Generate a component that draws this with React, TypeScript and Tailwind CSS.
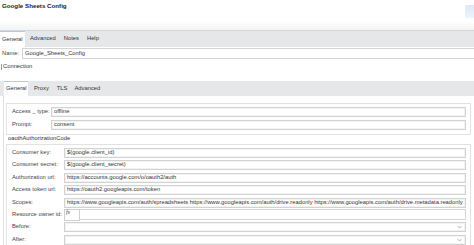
import React from "react";

const Input = ({ value, chevron }: { value?: string; chevron?: boolean }) => (
  <div className="flex-1 min-w-0 h-[10px] border border-[#d2d2d2] bg-white shadow-[inset_0_0_0_1px_#f3f3f3] flex items-center px-[2px] overflow-hidden whitespace-nowrap leading-none">
    <span className="flex-1 min-w-0 overflow-hidden">{value}</span>
    {chevron && (
      <svg width="5" height="4" viewBox="0 0 5 4" className="shrink-0 mr-[1px]">
        <path d="M0.5 1 L2.5 3 L4.5 1" fill="none" stroke="#9a9a9a" strokeWidth="0.7" />
      </svg>
    )}
  </div>
);

const Row = ({ label, children, lw }: { label: string; children: React.ReactNode; lw: string }) => (
  <div className="flex items-center h-[12.4px] pr-[4px]">
    <div className={`${lw} pl-[5px] shrink-0 whitespace-nowrap leading-none text-[#444]`}>{label}</div>
    {children}
  </div>
);

export default function App() {
  return (
    <div className="w-[474px] h-[245px] overflow-hidden bg-white text-[#333] relative font-['Liberation_Sans',Arial,sans-serif] text-[5.8px]">
      <div className="absolute right-0 top-[5px] w-[9px] h-[13px] bg-gradient-to-b from-[#dbe9f7] to-[#eef4fb] rounded-l-[1px]" />
      {/* title */}
      <div className="h-[30px] bg-gradient-to-b from-white from-70% to-[#f3f3f3] pl-[2px] pt-[2px]">
        <div className="font-bold text-[6.2px] leading-[8px] text-[#222]">Google Sheets Config</div>
      </div>
      {/* top tabs */}
      <div className="h-[17px] bg-[#e6e7e9] border-t border-[#d6d6d6] flex items-stretch">
        <div className="bg-white border-t-[1.5px] border-[#a8cfe9] px-[2px] w-[25px] flex items-center leading-none">General</div>
        <div className="ml-[5px] flex items-center leading-none">Advanced</div>
        <div className="ml-[8px] flex items-center leading-none">Notes</div>
        <div className="ml-[8px] flex items-center leading-none">Help</div>
      </div>
      {/* name */}
      <div className="flex items-center h-[13px]">
        <div className="w-[22px] pl-[2px] leading-none text-[#444]">Name:</div>
        <div className="flex-1 h-[11px] border border-[#d4d4d4] border-r-0 flex items-center px-[2px] leading-none">Google_Sheets_Config</div>
      </div>
      <div className="h-[14px] flex items-center pl-[1px] leading-none">
        <span className="w-px h-[6px] bg-[#999] mr-px" />Connection
      </div>
      <div className="h-[7px]" />
      {/* inner tabs */}
      <div className="h-[15px] bg-[#e6e7e9] flex items-stretch pl-[4px]">
        <div className="bg-white border-t-[1.5px] border-[#a8cfe9] px-[2px] w-[24px] flex items-center leading-none">General</div>
        <div className="ml-[6px] flex items-center leading-none">Proxy</div>
        <div className="ml-[8px] flex items-center leading-none">TLS</div>
        <div className="ml-[7px] flex items-center leading-none">Advanced</div>
      </div>
      {/* panel */}
      <div className="ml-[3px] border-l border-[#e0e0e0] pt-[7px] h-[160px]">
        <div className="ml-[2px] mr-[3px] border border-[#e2e2e2] pt-[2px] pb-[3px]">
          <Row label="Access _ type:" lw="w-[44px]"><Input value="offline" /></Row>
          <Row label="Prompt:" lw="w-[44px]"><Input value="consent" /></Row>
        </div>
        <div className="h-[9px] flex items-center pl-[4px] leading-none">oauthAuthorizationCode</div>
        <div className="ml-[2px] mr-[3px] border border-[#e2e2e2] pt-[2px] pb-[3px]">
          <Row label="Consumer key:" lw="w-[57px]"><Input value="$(google.client_id)" /></Row>
          <Row label="Consumer secret:" lw="w-[57px]"><Input value="$(google.client_secret)" /></Row>
          <Row label="Authorization url:" lw="w-[57px]"><Input value="https://accounts.google.com/o/oauth2/auth" /></Row>
          <Row label="Access token url:" lw="w-[57px]"><Input value="https://oauth2.googleapis.com/token" /></Row>
          <Row label="Scopes:" lw="w-[57px]"><Input value="https://www.googleapis.com/auth/spreadsheets https://www.googleapis.com/auth/drive.readonly https://www.googleapis.com/auth/drive.metadata.readonly" /></Row>
          <div className="flex items-center h-[12.4px] pr-[4px]">
            <div className="w-[57px] pl-[5px] shrink-0 whitespace-nowrap leading-none text-[#444]">Resource owner id:</div>
            <div className="w-[16px] h-[12px] border border-[#cfcfcf] bg-white relative shrink-0">
              <span className="absolute left-[1px] top-[0px] italic font-['Liberation_Serif',serif] text-[5.5px] leading-none">fx</span>
            </div>
            <div className="flex-1 h-[11px] border border-l-0 border-[#d4d4d4]" />
          </div>
          <Row label="Before:" lw="w-[57px]"><Input chevron /></Row>
          <Row label="After:" lw="w-[57px]"><Input chevron /></Row>
        </div>
      </div>
    </div>
  );
}
